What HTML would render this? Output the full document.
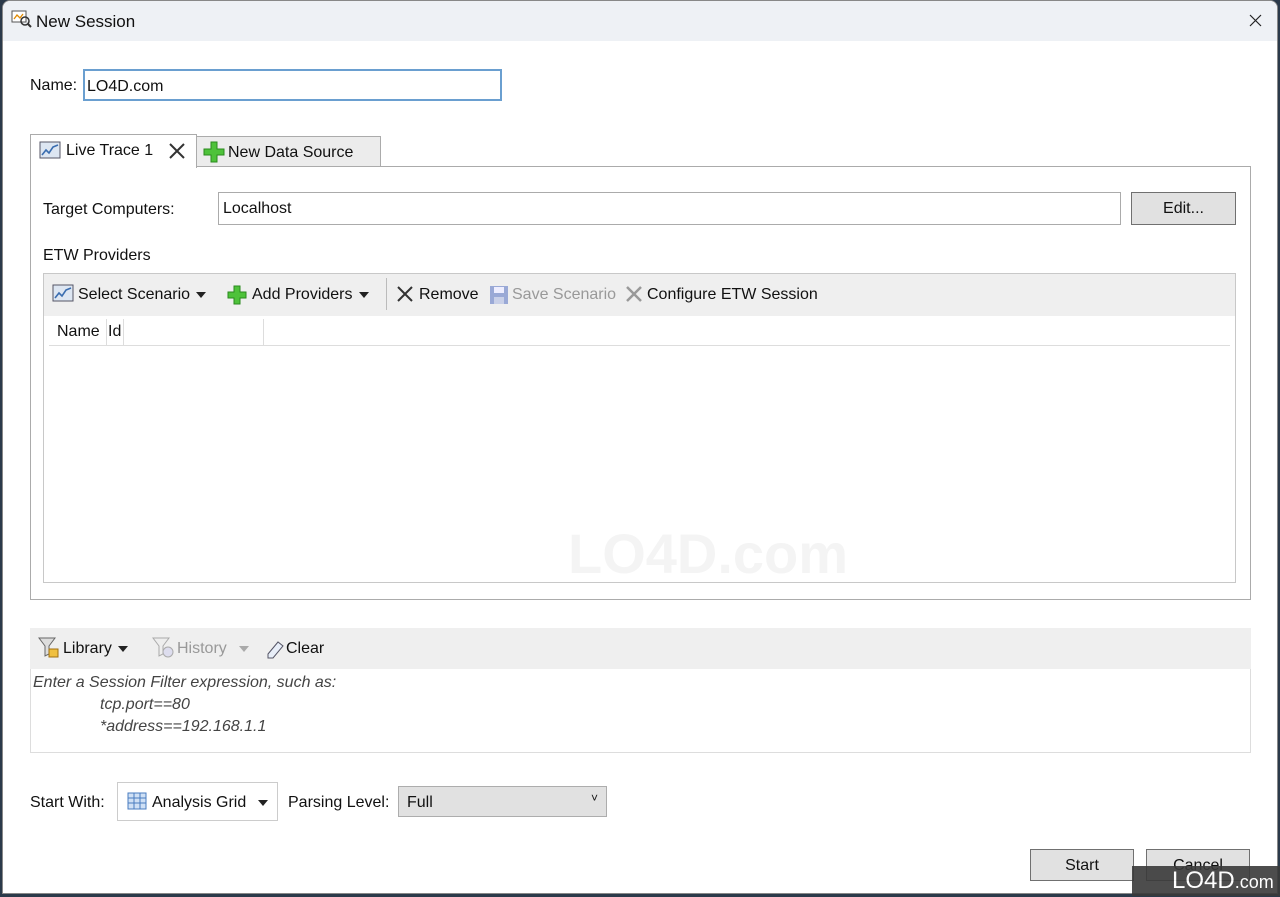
<!DOCTYPE html>
<html><head><meta charset="utf-8"><style>
*{box-sizing:border-box;margin:0;padding:0}
body{width:1280px;height:896px;overflow:hidden;background:#2b3a4a;font-family:"Segoe UI","Liberation Sans",sans-serif;font-size:16px;color:#111;position:relative}
.win{position:absolute;left:2px;top:0;width:1276px;height:894px;background:#fff;border-radius:8px 8px 0 0;overflow:hidden;border:1px solid #888}
.title{height:40px;background:#eef1f5;position:relative}
.a{position:absolute;white-space:nowrap}
.box{position:absolute;border:1px solid #ababab;background:#fff}
.btn{position:absolute;border:1px solid #707070;background:#e1e1e1;text-align:center}
.tri{display:inline-block;width:0;height:0;border-left:5px solid transparent;border-right:5px solid transparent;border-top:6px solid #222;vertical-align:middle;margin-left:6px}
.t1{margin-top:1px}
</style></head><body>
<div class="win">
<div class="title">
<svg class="a" style="left:8px;top:8px" width="22" height="20" viewBox="0 0 22 20"><rect x="1" y="2" width="14" height="11" fill="#fff" stroke="#555"/><polyline points="3,10 6,6 9,9 12,5" fill="none" stroke="#e08a00" stroke-width="1.3"/><circle cx="14" cy="12" r="4" fill="none" stroke="#333" stroke-width="1.5"/><line x1="17" y1="15" x2="20" y2="18" stroke="#333" stroke-width="2"/></svg>
<div class="a" style="left:33px;top:11px;font-size:17px">New Session</div>
<svg class="a" style="left:1246px;top:13px" width="13" height="13"><path d="M1 1L12 12M12 1L1 12" stroke="#222" stroke-width="1.2"/></svg>
</div>
<div class="a" style="left:27px;top:76px">Name:</div>
<div class="box" style="left:80px;top:68px;width:419px;height:32px;border:2px solid #6a9fd0;padding:7px 2px">LO4D.com</div>

<div class="a" style="left:27px;top:133px;width:167px;height:34px;background:#fff;border:1px solid #ababab;border-bottom:none;z-index:2"></div>
<svg class="a" style="left:36px;top:140px;z-index:3" width="22" height="18"><rect x="1" y="1" width="20" height="16" fill="#dde6f2" stroke="#556"/><polyline points="3,14 7,9 10,12 14,6 19,4" fill="none" stroke="#3a6db0" stroke-width="1.6"/></svg>
<div class="a" style="left:63px;top:141px;z-index:3">Live Trace 1</div>
<svg class="a" style="left:165px;top:141px;z-index:3" width="18" height="18"><path d="M2 2L16 16M16 2L2 16" stroke="#333" stroke-width="2"/></svg>
<div class="a" style="left:193px;top:135px;width:185px;height:31px;background:#ececec;border:1px solid #ababab"></div>
<svg class="a" style="left:200px;top:140px" width="22" height="22"><path d="M8 1h6v7h7v6h-7v7H8v-7H1V8h7z" fill="#4ec23a" stroke="#2a8a1e"/></svg>
<div class="a" style="left:225px;top:143px">New Data Source</div>
<div class="box" style="left:27px;top:165px;width:1221px;height:434px"></div>

<div class="a" style="left:40px;top:200px">Target Computers:</div>
<div class="box" style="left:215px;top:191px;width:903px;height:33px;padding:7px 4px">Localhost</div>
<div class="btn" style="left:1128px;top:191px;width:105px;height:33px;padding-top:7px">Edit...</div>
<div class="a" style="left:40px;top:246px">ETW Providers</div>

<div class="box" style="left:40px;top:272px;width:1193px;height:310px;border-color:#c8c8c8"></div>
<div class="a" style="left:41px;top:273px;width:1191px;height:42px;background:#efefef"></div>
<svg class="a" style="left:49px;top:283px" width="22" height="18"><rect x="1" y="1" width="20" height="16" fill="#dde6f2" stroke="#556"/><polyline points="3,14 7,9 10,12 14,6 19,4" fill="none" stroke="#3a6db0" stroke-width="1.6"/></svg>
<div class="a" style="left:75px;top:285px">Select Scenario<span class="tri"></span></div>
<svg class="a" style="left:224px;top:284px" width="20" height="20"><path d="M7 1h6v6h6v6h-6v6H7v-6H1V7h6z" fill="#4ec23a" stroke="#2a8a1e"/></svg>
<div class="a" style="left:249px;top:285px">Add Providers<span class="tri"></span></div>
<div class="a" style="left:383px;top:277px;width:1px;height:32px;background:#bbb"></div>
<svg class="a" style="left:393px;top:284px" width="18" height="18"><path d="M2 2L16 16M16 2L2 16" stroke="#333" stroke-width="2"/></svg>
<div class="a" style="left:416px;top:285px">Remove</div>
<svg class="a" style="left:486px;top:284px" width="20" height="20"><rect x="1" y="1" width="18" height="18" fill="#9aa9d6"/><rect x="5" y="2" width="10" height="6" fill="#eef"/><rect x="5" y="12" width="10" height="7" fill="#c9d0e8"/></svg>
<div class="a" style="left:509px;top:285px;color:#999">Save Scenario</div>
<svg class="a" style="left:622px;top:284px" width="18" height="18"><path d="M2 2L16 16M16 2L2 16" stroke="#999" stroke-width="2.5"/></svg>
<div class="a" style="left:644px;top:285px">Configure ETW Session</div>
<div class="a" style="left:46px;top:318px;width:1181px;height:27px;border-bottom:1px solid #ddd"></div>
<div class="a" style="left:46px;top:318px;width:215px;height:27px;border-right:1px solid #ddd"></div>
<div class="a" style="left:54px;top:322px">Name</div>
<div class="a" style="left:103px;top:318px;width:1px;height:26px;background:#ddd"></div>
<div class="a" style="left:105px;top:322px">Id</div>
<div class="a" style="left:120px;top:318px;width:1px;height:26px;background:#ddd"></div>
<div class="a" style="left:565px;top:520px;font-size:56px;color:#f4f4f4;font-weight:bold">LO4D.com</div>

<div class="a" style="left:27px;top:627px;width:1221px;height:41px;background:#efefef"></div>
<svg class="a" style="left:35px;top:636px" width="24" height="22"><path d="M1 1h16l-6 8v8l-4 2V9z" fill="#ddd" stroke="#666"/><rect x="11" y="12" width="9" height="8" fill="#f0c040" stroke="#a07010"/></svg>
<div class="a" style="left:60px;top:639px">Library<span class="tri"></span></div>
<svg class="a" style="left:149px;top:636px" width="24" height="22"><path d="M1 1h16l-6 8v8l-4 2V9z" fill="#eee" stroke="#aaa"/><circle cx="16" cy="15" r="5" fill="#dde" stroke="#aaa"/></svg>
<div class="a" style="left:174px;top:639px;color:#999">History<span class="tri" style="border-top-color:#aaa;margin-left:12px"></span></div>
<svg class="a" style="left:262px;top:638px" width="22" height="20"><path d="M3 15L13 3l5 4-10 12H3z" fill="#e8eef8" stroke="#556"/></svg>
<div class="a" style="left:283px;top:639px">Clear</div>
<div class="box" style="left:27px;top:668px;width:1221px;height:84px;border-color:#ddd;border-top:none"></div>
<div class="a" style="left:30px;top:673px;font-style:italic;color:#444">Enter a Session Filter expression, such as:</div>
<div class="a" style="left:97px;top:695px;font-style:italic;color:#444">tcp.port==80</div>
<div class="a" style="left:97px;top:717px;font-style:italic;color:#444">*address==192.168.1.1</div>

<div class="a" style="left:27px;top:793px">Start With:</div>
<div class="box" style="left:114px;top:781px;width:161px;height:39px;border-color:#ccc"></div>
<svg class="a" style="left:124px;top:791px" width="20" height="18"><rect x="1" y="1" width="18" height="16" fill="#cfe0f5" stroke="#4a7cc0"/><path d="M1 6h18M1 11h18M7 1v16M13 1v16" stroke="#4a7cc0"/></svg>
<div class="a" style="left:149px;top:793px">Analysis Grid<span class="tri" style="margin-left:12px"></span></div>
<div class="a" style="left:285px;top:793px">Parsing Level:</div>
<div class="btn" style="left:395px;top:785px;width:209px;height:31px;border-color:#adadad;text-align:left;padding:7px 8px">Full<span class="a" style="right:8px;top:4px;font-size:12px">˅</span></div>

<div class="btn" style="left:1027px;top:848px;width:104px;height:32px;padding-top:7px">Start</div>
<div class="btn" style="left:1143px;top:848px;width:104px;height:32px;padding-top:7px">Cancel</div>
</div>
<div class="a" style="left:1132px;top:866px;width:148px;height:30px;background:#3a3a3a;opacity:.9;color:#fff;font-size:24px;padding:0 0 0 40px;line-height:30px">LO4D<span style="font-size:18px">.com</span></div>
</body></html>
